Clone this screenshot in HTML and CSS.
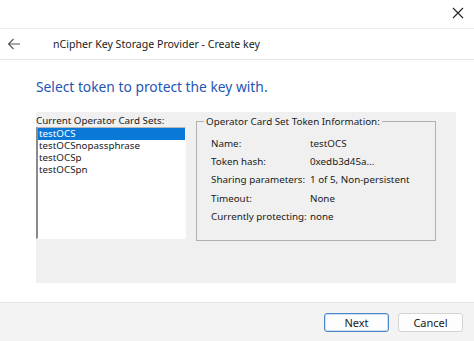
FILE: index.html
```html
<!DOCTYPE html>
<html>
<head>
<meta charset="utf-8">
<link rel="stylesheet" href="styles.css">
</head>
<body>
<div class="window">
  <div class="topbar">
    <svg class="close" width="12" height="12" viewBox="0 0 12 12"><path d="M1 1 L11 11 M11 1 L1 11" stroke="#222" stroke-width="1.1" fill="none"/></svg>
  </div>
  <div class="header">
    <svg class="back" width="14" height="12" viewBox="0 0 14 12"><path d="M13 6 H1.5 M6.5 1 L1.5 6 L6.5 11" stroke="#555" stroke-width="1.1" fill="none"/></svg>
    <span class="title">nCipher Key Storage Provider - Create key</span>
  </div>
  <div class="content">
    <h1 class="heading">Select token to protect the key with.</h1>
    <div class="panel">
      <div class="sets">
        <div class="label">Current Operator Card Sets:</div>
        <div class="listbox">
          <div class="item selected">testOCS</div>
          <div class="item">testOCSnopassphrase</div>
          <div class="item">testOCSp</div>
          <div class="item">testOCSpn</div>
        </div>
      </div>
      <fieldset class="group">
        <legend>Operator Card Set Token Information:</legend>
        <div class="info">
          <span>Name:</span><span>testOCS</span>
          <span>Token hash:</span><span>0xedb3d45a...</span>
          <span>Sharing parameters:</span><span>1 of 5, Non-persistent</span>
          <span>Timeout:</span><span>None</span>
          <span>Currently protecting:</span><span>none</span>
        </div>
      </fieldset>
    </div>
  </div>
  <div class="footer">
    <button class="btn primary">Next</button>
    <button class="btn">Cancel</button>
  </div>
</div>
</body>
</html>
```
FILE: styles.css
```css
html, body {
  margin: 0;
  padding: 0;
  background: #ffffff;
}
body {
  font-family: "Noto Sans", "Open Sans", sans-serif;
  color: #1a1a1a;
}
.window {
  width: 474px;
  height: 341px;
  display: flex;
  flex-direction: column;
  overflow: hidden;
}
.topbar {
  height: 28px;
  display: flex;
  justify-content: flex-end;
  align-items: center;
  padding-right: 10px;
  border-bottom: 1px solid #ececec;
}
.close {
  margin-top: -2px;
}
.header {
  height: 30px;
  display: flex;
  align-items: center;
  border-bottom: 1px solid #e6e6e6;
}
.back {
  margin-left: 7px;
  margin-right: 32px;
}
.title {
  font-size: 10.6px;
  color: #1a1a1a;
}
.content {
  padding-left: 36px;
  height: 242px;
  box-sizing: border-box;
}
.heading {
  margin: 17px 0 0 0;
  font-weight: normal;
  font-size: 13.8px;
  line-height: 20px;
  color: #1f55b5;
}
.panel {
  margin-top: 15px;
  width: 420px;
  height: 171px;
  background: #f0f0f0;
  display: flex;
  align-items: flex-start;
  font-size: 9.8px;
  white-space: nowrap;
}
.sets {
  width: 150px;
  margin-top: 2px;
}
.label {
  line-height: 13px;
}
.listbox {
  margin-top: 0;
  height: 112px;
  box-sizing: border-box;
  background: #fff;
  border-left: 2px solid #8a8a8a;
  border-top: 1px solid #b8b8b8;
  border-right: 1px solid #fdfdfd;
  border-bottom: 1px solid #fdfdfd;
  padding-top: 0;
}
.item {
  line-height: 12px;
  padding-left: 1px;
}
.item.selected {
  background: #0a78d7;
  color: #fff;
}
.group {
  margin: 3px 0 0 10px;
  width: 240px;
  height: 126px;
  box-sizing: border-box;
  border: 1px solid #b0b0b0;
  padding: 6px 0 0 5px;
}
.group legend {
  padding: 0 2px;
  margin-left: 2px;
  line-height: 13px;
}
.info {
  display: grid;
  grid-template-columns: 99px auto;
  grid-auto-rows: 18.3px;
  align-items: center;
  margin-left: 9px;
}
.footer {
  margin-top: auto;
  height: 38px;
  background: #f3f3f3;
  border-top: 1px solid #e2e2e2;
  display: flex;
  justify-content: flex-end;
  align-items: center;
  gap: 9px;
  padding-right: 11px;
}
.btn {
  width: 65px;
  height: 19px;
  box-sizing: border-box;
  background: #fdfdfd;
  border: 1px solid #d4d4d4;
  border-radius: 3px;
  font-family: "Noto Sans", "Open Sans", sans-serif;
  font-size: 11px;
  color: #1a1a1a;
  padding: 0;
}
.btn.primary {
  border: 1px solid #4a86c8;
  box-shadow: inset 0 0 0 1px #cfe0f2;
}
```
